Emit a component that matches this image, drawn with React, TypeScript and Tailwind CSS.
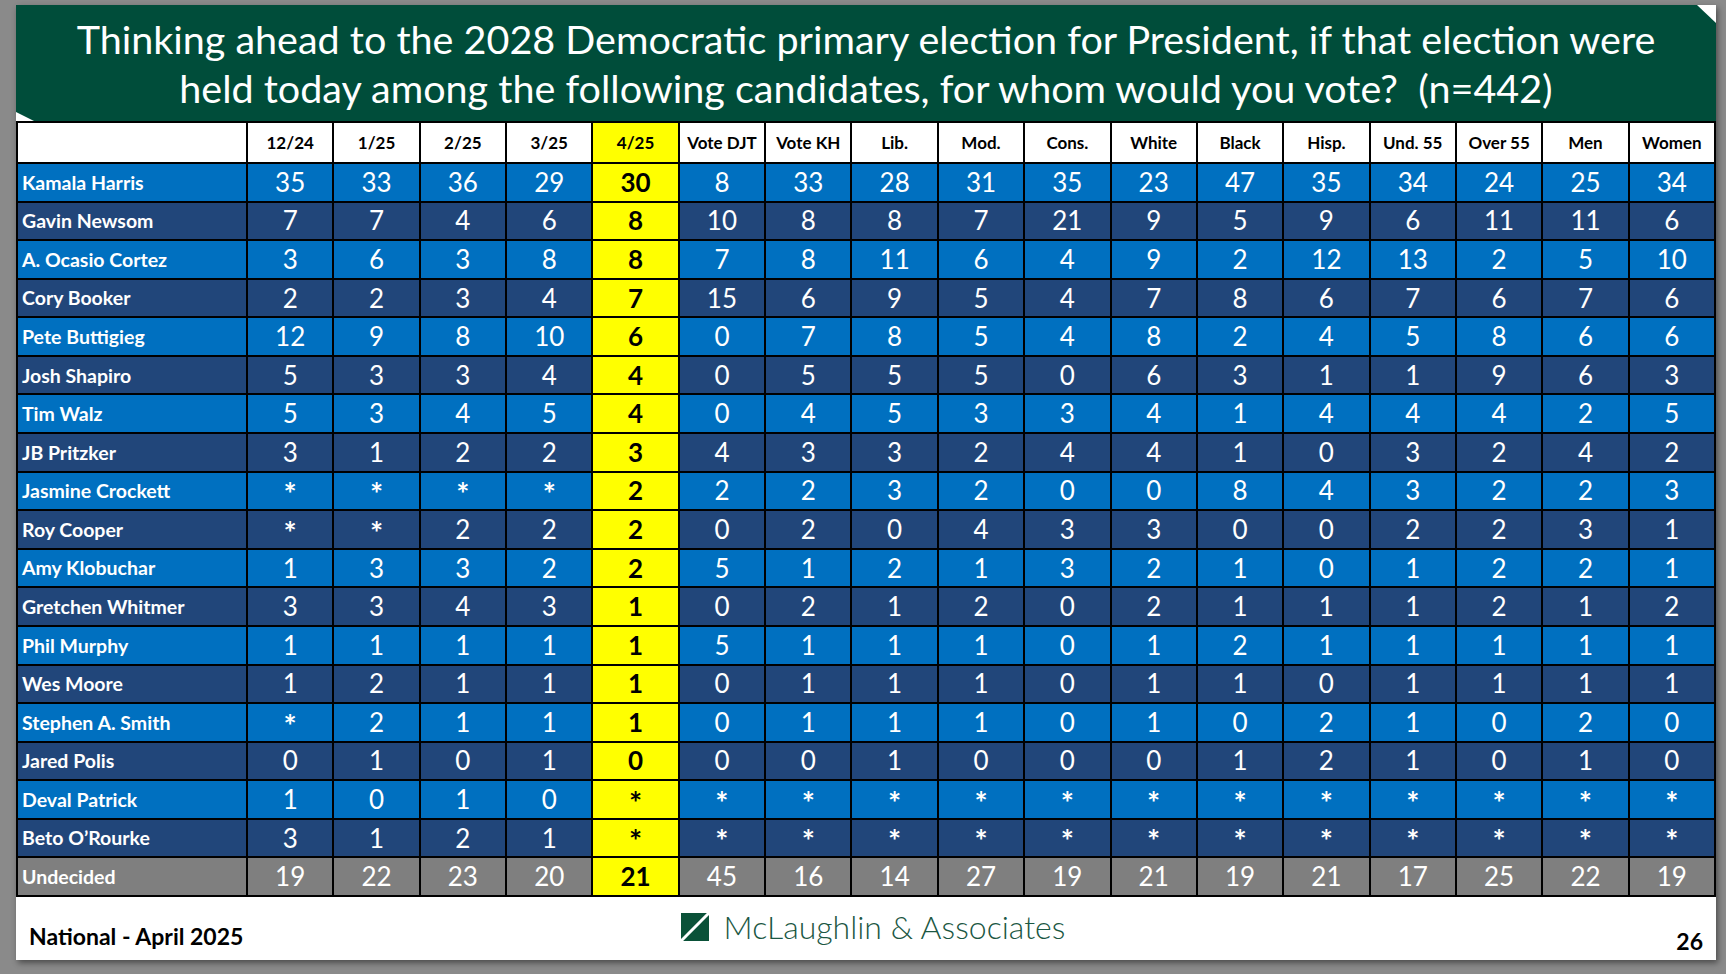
const cols = [
  "12/24", "1/25", "2/25", "3/25", "4/25", "Vote DJT", "Vote KH", "Lib.", "Mod.",
  "Cons.", "White", "Black", "Hisp.", "Und. 55", "Over 55", "Men", "Women",
];

// candidate name, then one value per column
const rows: [string, string][] = [
  ["Kamala Harris", "35 33 36 29 30 8 33 28 31 35 23 47 35 34 24 25 34"],
  ["Gavin Newsom", "7 7 4 6 8 10 8 8 7 21 9 5 9 6 11 11 6"],
  ["A. Ocasio Cortez", "3 6 3 8 8 7 8 11 6 4 9 2 12 13 2 5 10"],
  ["Cory Booker", "2 2 3 4 7 15 6 9 5 4 7 8 6 7 6 7 6"],
  ["Pete Buttigieg", "12 9 8 10 6 0 7 8 5 4 8 2 4 5 8 6 6"],
  ["Josh Shapiro", "5 3 3 4 4 0 5 5 5 0 6 3 1 1 9 6 3"],
  ["Tim Walz", "5 3 4 5 4 0 4 5 3 3 4 1 4 4 4 2 5"],
  ["JB Pritzker", "3 1 2 2 3 4 3 3 2 4 4 1 0 3 2 4 2"],
  ["Jasmine Crockett", "* * * * 2 2 2 3 2 0 0 8 4 3 2 2 3"],
  ["Roy Cooper", "* * 2 2 2 0 2 0 4 3 3 0 0 2 2 3 1"],
  ["Amy Klobuchar", "1 3 3 2 2 5 1 2 1 3 2 1 0 1 2 2 1"],
  ["Gretchen Whitmer", "3 3 4 3 1 0 2 1 2 0 2 1 1 1 2 1 2"],
  ["Phil Murphy", "1 1 1 1 1 5 1 1 1 0 1 2 1 1 1 1 1"],
  ["Wes Moore", "1 2 1 1 1 0 1 1 1 0 1 1 0 1 1 1 1"],
  ["Stephen A. Smith", "* 2 1 1 1 0 1 1 1 0 1 0 2 1 0 2 0"],
  ["Jared Polis", "0 1 0 1 0 0 0 1 0 0 0 1 2 1 0 1 0"],
  ["Deval Patrick", "1 0 1 0 * * * * * * * * * * * * *"],
  ["Beto O\u2019Rourke", "3 1 2 1 * * * * * * * * * * * * *"],
  ["Undecided", "19 22 23 20 21 45 16 14 27 19 21 19 21 17 25 22 19"],
];

const font = { fontFamily: "Lato, 'Open Sans', sans-serif" };

function rowBg(i: number) {
  if (i === rows.length - 1) return "bg-[#7f7f7f]";
  return i % 2 === 0 ? "bg-[#0070c0]" : "bg-[#21467a]";
}

function Logo() {
  return (
    <svg width="28" height="28" viewBox="0 0 28 28">
      <rect width="28" height="28" fill="#0a5138" />
      <path d="M-1 29 L29 -1" stroke="#ffffff" strokeWidth="3" />
    </svg>
  );
}

export default function App() {
  return (
    <div className="w-[1726px] h-[974px] bg-[#8a8a8a] pt-[5px] pl-[16px] overflow-hidden" style={font}>
      <div className="w-[1700px] h-[955px] bg-white flex flex-col shadow-[2px_3px_6px_rgba(0,0,0,0.45)]">
        {/* title band */}
        <div className="relative h-[116px] bg-[#004d3a] flex flex-col items-center pt-[9px]">
          <p className="text-white text-[39.5px] leading-[49px] text-center whitespace-pre">
            Thinking ahead to the 2028 Democratic primary election for President, if that election were
          </p>
          <p className="text-white text-[39.5px] leading-[49px] text-center whitespace-pre">
            {"held today among the following candidates, for whom would you vote?  (n=442)"}
          </p>
          <div className="absolute left-0 bottom-0 w-0 h-0 border-l-[18px] border-l-white border-t-[9px] border-t-transparent" />
          <div className="absolute right-0 top-0 w-0 h-0 border-r-[19px] border-r-white border-b-[18px] border-b-transparent" />
        </div>

        {/* table */}
        <div className="h-[776px] bg-black p-[2px] grid grid-cols-[228px_repeat(17,minmax(0,1fr))] grid-rows-[39px_repeat(19,minmax(0,1fr))] gap-[2px]">
          <div className="bg-white" />
          {cols.map((c) => (
            <div
              key={c}
              className={`${c === "4/25" ? "bg-[#ffff00]" : "bg-white"} flex items-center justify-center text-black font-bold text-[17px]`}
            >
              {c}
            </div>
          ))}
          {rows.map(([name, vals], i) => (
            <>
              <div key={name} className={`${rowBg(i)} flex items-center pl-[4px] text-white font-bold text-[19.5px]`}>
                {name}
              </div>
              {vals.split(" ").map((v, j) => {
                const star = v === "*";
                return j === 4 ? (
                  <div
                    key={name + j}
                    className={`bg-[#ffff00] flex items-center justify-center text-black font-bold ${star ? "text-[31px] pt-[5px]" : "text-[26px]"}`}
                  >
                    {v}
                  </div>
                ) : (
                  <div
                    key={name + j}
                    className={`${rowBg(i)} flex items-center justify-center text-white ${star ? "font-bold text-[31px] pt-[5px]" : "text-[26px]"}`}
                  >
                    {v}
                  </div>
                );
              })}
            </>
          ))}
        </div>

        {/* footer */}
        <div className="flex-1 grid grid-cols-[1fr_auto_1fr] items-end px-[13px] pb-[12px]">
          <span className="text-black font-bold text-[23px] leading-none">National - April 2025</span>
          <div className="flex items-center gap-[15px] mb-[5px] ml-[14px]">
            <Logo />
            <span className="text-[#1b5743] font-light text-[32px] leading-none">McLaughlin &amp; Associates</span>
          </div>
          <span className="text-black font-bold text-[23px] leading-none -mb-[5px] justify-self-end">26</span>
        </div>
      </div>
    </div>
  );
}
